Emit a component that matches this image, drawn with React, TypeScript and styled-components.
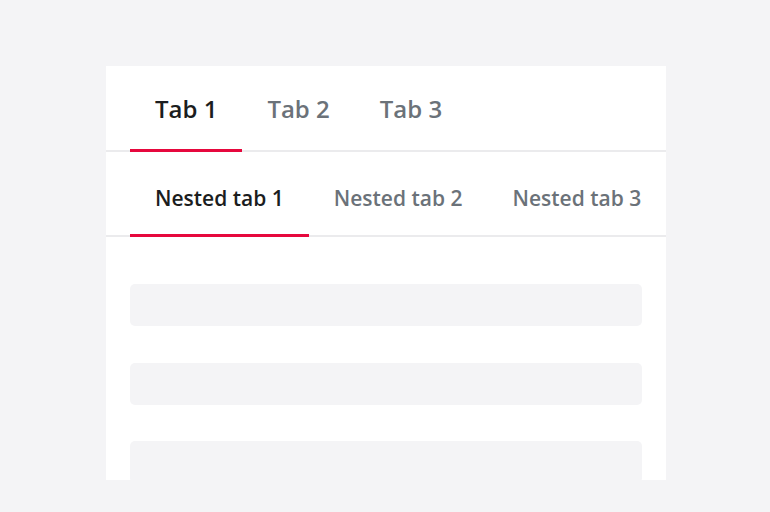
import React, { useState } from "react";
import styled, { createGlobalStyle } from "styled-components";

const Global = createGlobalStyle`
  html, body {
    margin: 0;
    padding: 0;
    background: #f4f4f6;
    font-family: "Open Sans", "Noto Sans", Arial, sans-serif;
  }
  * { box-sizing: border-box; }
`;

const Page = styled.div`
  width: 770px;
  height: 512px;
  padding: 66px 0 0 106px;
  overflow: hidden;
`;

const Card = styled.div`
  width: 560px;
  height: 414px;
  background: #ffffff;
  overflow: hidden;
  display: flex;
  flex-direction: column;
`;

const TabList = styled.div`
  display: flex;
  padding: 0 24px;
  border-bottom: 2px solid #ebebed;
`;

const Tab = styled.button<{ $active: boolean; $level: 1 | 2 }>`
  position: relative;
  border: none;
  background: transparent;
  cursor: pointer;
  font-family: inherit;
  font-weight: 600;
  padding: ${(p) => (p.$level === 1 ? "27px 25px 25px" : "31px 25px 22px")};
  font-size: ${(p) => (p.$level === 1 ? "24px" : "21px")};
  line-height: ${(p) => (p.$level === 1 ? "32px" : "30px")};
  color: ${(p) => (p.$active ? "#1b1d20" : "#6b7279")};
  white-space: nowrap;

  &::after {
    content: "";
    position: absolute;
    left: 0;
    right: 0;
    bottom: -2px;
    height: 3px;
    background: ${(p) => (p.$active ? "#e6083d" : "transparent")};
  }
`;

const Content = styled.div`
  display: flex;
  flex-direction: column;
  gap: 36.5px;
  padding: 47px 24px 0;
`;

const Skeleton = styled.div`
  height: 42px;
  flex-shrink: 0;
  border-radius: 5px;
  background: #f4f4f6;
`;

export default function App() {
  const [tab, setTab] = useState(0);
  const [nested, setNested] = useState(0);
  return (
    <>
      <Global />
      <Page>
        <Card>
          <TabList>
            {["Tab 1", "Tab 2", "Tab 3"].map((t, i) => (
              <Tab key={t} $level={1} $active={tab === i} onClick={() => setTab(i)}>
                {t}
              </Tab>
            ))}
          </TabList>
          <TabList>
            {["Nested tab 1", "Nested tab 2", "Nested tab 3"].map((t, i) => (
              <Tab key={t} $level={2} $active={nested === i} onClick={() => setNested(i)}>
                {t}
              </Tab>
            ))}
          </TabList>
          <Content>
            <Skeleton />
            <Skeleton />
            <Skeleton />
          </Content>
        </Card>
      </Page>
    </>
  );
}
